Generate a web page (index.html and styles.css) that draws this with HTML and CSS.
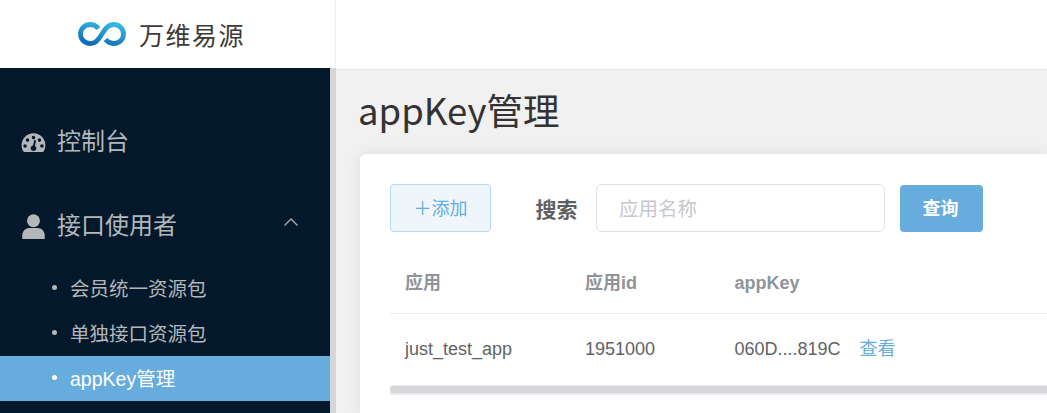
FILE: index.html
```html
<!DOCTYPE html>
<html lang="zh-CN">
<head>
<meta charset="utf-8">
<title>appKey管理</title>
<link rel="stylesheet" href="styles.css">
</head>
<body>
<header class="topbar">
  <div class="brand">
    <svg class="brand-mark" viewBox="0 0 48 24" width="48" height="24">
      <defs>
        <linearGradient id="lg" x1="0.2" y1="1" x2="0.7" y2="0">
          <stop offset="0" stop-color="#0f6db8"/>
          <stop offset="1" stop-color="#35b4dd"/>
        </linearGradient>
      </defs>
      <path d="M20.500 6.500C18.200 3.800 15.600 2.500 12.300 2.500C6.800 2.500 2.500 6.800 2.500 12C2.500 17.300 6.800 21.500 12.300 21.500C17 21.500 19.800 18.800 24 12C28.200 5.200 31 2.500 35.700 2.500C41.200 2.500 45.500 6.800 45.500 12C45.500 17.300 41.200 21.500 35.700 21.500C32.400 21.500 29.800 20.200 27.500 17.500" fill="none" stroke="url(#lg)" stroke-width="4.800"/>
    </svg>
    <span class="brand-name">万维易源</span>
  </div>
  <div class="topbar-rest"></div>
</header>
<div class="shell">
  <nav class="sidebar">
    <a class="nav-item">
      <svg class="nav-icon" viewBox="0 0 24 24" width="25" height="25">
        <path fill-rule="evenodd" fill="#b4b7b9" d="M12 3.200C5.700 3.200 .6 8.300 .6 14.600C.6 16.700 1.200 18.700 2.200 20.400C2.500 20.800 2.900 21 3.300 21H20.700C21.100 21 21.500 20.800 21.800 20.400C22.800 18.700 23.400 16.700 23.400 14.600C23.400 8.300 18.300 3.200 12 3.200ZM12 5.600A1.700 1.700 0 1 1 12 9A1.700 1.700 0 0 1 12 5.600ZM6.300 8A1.700 1.700 0 1 1 6.300 11.400A1.700 1.700 0 0 1 6.300 8ZM17.700 8A1.700 1.700 0 1 1 17.700 11.400A1.700 1.700 0 0 1 17.700 8ZM3.900 13.600A1.700 1.700 0 1 1 3.900 17A1.700 1.700 0 0 1 3.900 13.600ZM20.100 13.600A1.700 1.700 0 1 1 20.100 17A1.700 1.700 0 0 1 20.100 13.600ZM14.400 10L13.400 15.300C14.300 15.800 14.800 16.700 14.800 17.600C14.800 19.100 13.500 20.200 12 20.200C10.500 20.200 9.200 19.100 9.200 17.600C9.200 16.200 10.300 15.100 11.600 14.900L12.700 9.600Z"/>
      </svg>
      <span>控制台</span>
    </a>
    <a class="nav-item nav-item-open">
      <svg class="nav-icon" viewBox="0 0 24 24" width="25" height="25">
        <circle cx="12" cy="6.500" r="6.200" fill="#b4b7b9"/>
        <path fill="#b4b7b9" d="M1.200 24V20.500C1.200 16.500 4.500 13.500 8 13.500H16C19.500 13.500 22.800 16.500 22.800 20.500V24Z"/>
      </svg>
      <span>接口使用者</span>
      <svg class="chevron" viewBox="0 0 16 10" width="16" height="10">
        <path d="M1.500 8.500L8 2L14.500 8.500" fill="none" stroke="#a5abb0" stroke-width="1.300"/>
      </svg>
    </a>
    <ul class="subnav">
      <li class="subnav-item">会员统一资源包</li>
      <li class="subnav-item">单独接口资源包</li>
      <li class="subnav-item is-active">appKey管理</li>
    </ul>
  </nav>
  <div class="gutter"></div>
  <main class="content">
    <h1 class="page-title">appKey管理</h1>
    <section class="card">
      <div class="toolbar">
        <button class="btn-add"><span class="plus">＋</span>添加</button>
        <label class="search-label">搜索</label>
        <input class="search-input" placeholder="应用名称">
        <button class="btn-query">查询</button>
      </div>
      <table class="data-table">
        <thead>
          <tr><th class="col-app">应用</th><th class="col-id">应用id</th><th>appKey</th></tr>
        </thead>
        <tbody>
          <tr>
            <td>just_test_app</td>
            <td>1951000</td>
            <td>060D....819C<a class="view-link">查看</a></td>
          </tr>
        </tbody>
      </table>
      <div class="scroll-track"><div class="scroll-thumb"></div></div>
    </section>
  </main>
</div>
</body>
</html>
```

FILE: styles.css
```css
* { box-sizing: border-box; }
html, body { margin: 0; height: 100%; overflow: hidden; }
body {
  width: 1047px;
  height: 413px;
  font-family: "Liberation Sans", "Noto Sans CJK SC", sans-serif;
  background: #f1f1f1;
  color: #5f6266;
}
.topbar {
  height: 70px;
  display: flex;
  background: #fff;
  border-bottom: 1px solid #e8e8e8;
}
.brand {
  width: 336px;
  height: 68px;
  border-right: 1px solid #ececec;
  display: flex;
  align-items: center;
  padding-left: 78px;
  gap: 13px;
}
.brand-name {
  font-family: "Noto Sans CJK SC", sans-serif;
  font-size: 25px;
  letter-spacing: 1.500px;
  color: #3e3a39;
}
.topbar-rest { flex: 1; }
.shell {
  display: flex;
  height: 345px;
  margin-top: -2px;
}
.sidebar {
  width: 330px;
  background: #03192b;
  padding-top: 46px;
  flex: none;
}
.gutter {
  width: 6px;
  flex: none;
  background: #d6d6d8;
}
.nav-item {
  display: flex;
  align-items: center;
  height: 50px;
  padding-left: 20.500px;
  gap: 11.500px;
  font-size: 24px;
  color: #b4b7b9;
  margin-bottom: 34px;
}
.nav-icon { flex: none; margin-top: 6px; }
.chevron { margin-left: 94.500px; margin-top: -3px; }
.nav-item-open { margin-bottom: 18px; }
.subnav { list-style: none; margin: 0; padding: 0; }
.subnav-item {
  height: 45px;
  line-height: 46px;
  padding-left: 70px;
  font-size: 19.500px;
  color: #b4b7b9;
  position: relative;
}
.subnav-item::before {
  content: "";
  position: absolute;
  left: 52px;
  top: 19px;
  width: 5px;
  height: 5px;
  border-radius: 50%;
  background: currentColor;
}
.is-active { background: #66acdc; color: #fff; }
.content {
  flex: 1;
  min-width: 0;
  padding-left: 24px;
  display: flex;
  flex-direction: column;
  overflow: hidden;
}
.page-title {
  margin: 0 0 0 -2px;
  height: 86px;
  flex: none;
  padding-top: 18px;
  font-family: "Noto Sans CJK SC", sans-serif;
  font-size: 36.500px;
  line-height: 48px;
  font-weight: 400;
  color: #333;
}
.card {
  flex: 1;
  min-height: 0;
  background: #fff;
  border-radius: 6px 0 0 0;
  box-shadow: 0 0 14px rgba(0,0,0,.09);
  padding: 30px 0 0 30px;
}
.toolbar { display: flex; align-items: center; height: 48px; }
.btn-add {
  width: 101px;
  height: 48px;
  border: 1px solid #b8daf0;
  border-radius: 4px;
  background: #eff6fb;
  color: #66acdc;
  font: 18px "Liberation Sans", "Noto Sans CJK SC", sans-serif;
  padding: 0 0 2px;
}
.plus { font-size: 18px; }
.search-label {
  margin-left: 44.500px;
  font-size: 21px;
  font-weight: 700;
  color: #5f5f5f;
  width: 60.500px;
}
.search-input {
  width: 289px;
  height: 48px;
  border: 1px solid #dfdfe6;
  border-radius: 6px;
  padding: 2px 22px 0;
  font: 19.500px "Liberation Sans", "Noto Sans CJK SC", sans-serif;
  outline: none;
}
.search-input::placeholder { color: #c6c8cd; opacity: 1; }
.btn-query {
  width: 83px;
  height: 47px;
  margin-left: 15px;
  padding: 0 2px 2px 0;
  border: 0;
  border-radius: 4px;
  background: #66acdc;
  color: #fff;
  font: 700 18px "Liberation Sans", "Noto Sans CJK SC", sans-serif;
}
.data-table {
  width: 100%;
  border-collapse: collapse;
  margin-top: 12px;
  font-size: 18px;
  line-height: 24px;
  table-layout: fixed;
}
.data-table th {
  height: 69px;
  text-align: left;
  padding: 9px 0 0 15px;
  font-weight: 700;
  color: #909399;
  border-bottom: 1px solid #ececf3;
}
.data-table td {
  height: 70px;
  padding: 2px 0 0 15px;
  color: #606266;
}
.col-app { width: 180px; }
.col-id { width: 149.500px; }
.view-link { color: #66acdc; margin-left: 19px; }
.scroll-track { height: 10px; margin-top: 2px; background: #e9e9ef; border-top: 1px solid #e9e9ef; }
.scroll-thumb { height: 7px; background: #d6d7d9; border-radius: 4px 0 0 4px; }
```
